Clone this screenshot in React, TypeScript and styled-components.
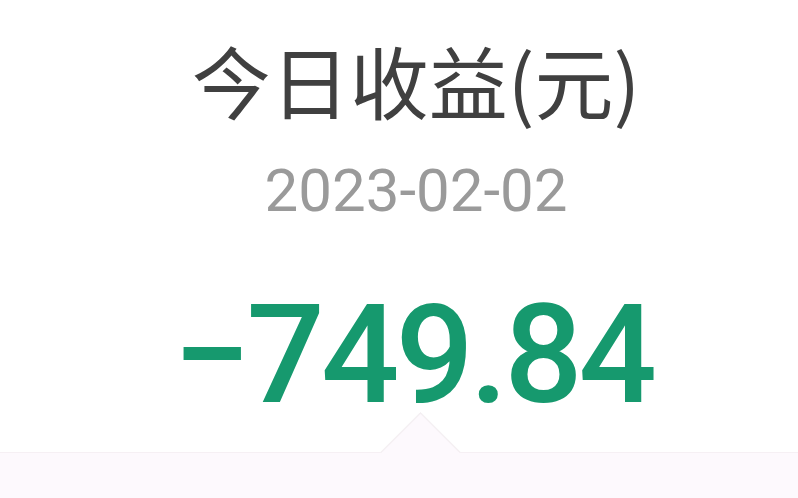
import React from "react";
import styled, { createGlobalStyle } from "styled-components";

const GlobalStyle = createGlobalStyle`
  html, body {
    margin: 0;
    padding: 0;
    background: #ffffff;
  }
  #root {
    width: 798px;
    height: 498px;
    overflow: hidden;
  }
`;

const Page = styled.div`
  width: 798px;
  height: 498px;
  display: flex;
  flex-direction: column;
  background: #ffffff;
`;

const Summary = styled.div`
  display: flex;
  flex-direction: column;
  align-items: center;
  padding-top: 40px;
  padding-left: 34px;
  height: 452px;
  box-sizing: border-box;
`;

const Title = styled.div`
  font-family: "Noto Sans CJK SC", sans-serif;
  font-size: 79px;
  line-height: 80px;
  color: #404040;
`;

const DateText = styled.div`
  margin-top: 41px;
  font-family: Roboto, sans-serif;
  font-size: 60px;
  line-height: 60px;
  color: #9a9a9a;
`;

const Amount = styled.div<{ $positive?: boolean }>`
  margin-top: 64px;
  margin-right: 6px;
  font-family: Roboto, sans-serif;
  font-weight: 500;
  font-size: 138px;
  line-height: 140px;
  letter-spacing: -4px;
  color: ${(p) => (p.$positive ? "#e0483e" : "#16996e")};
`;

const Footer = styled.div`
  position: relative;
  flex: 1;
  background: #fdf9fd;
  border-top: 1px solid #f6f0f4;
`;

const Pointer = styled.span`
  position: absolute;
  left: 392px;
  top: -29px;
  width: 56px;
  height: 56px;
  background: #fdf9fd;
  border-top: 1px solid #f3eef1;
  border-left: 1px solid #f3eef1;
  transform: rotate(45deg);
`;

const App: React.FC = () => {
  const income = -749.84;
  return (
    <Page>
      <GlobalStyle />
      <Summary>
        <Title>今日收益(元)</Title>
        <DateText>2023-02-02</DateText>
        <Amount $positive={income > 0}>
          {income < 0 ? "−" : ""}
          {Math.abs(income).toFixed(2)}
        </Amount>
      </Summary>
      <Footer>
        <Pointer />
      </Footer>
    </Page>
  );
};

export default App;
